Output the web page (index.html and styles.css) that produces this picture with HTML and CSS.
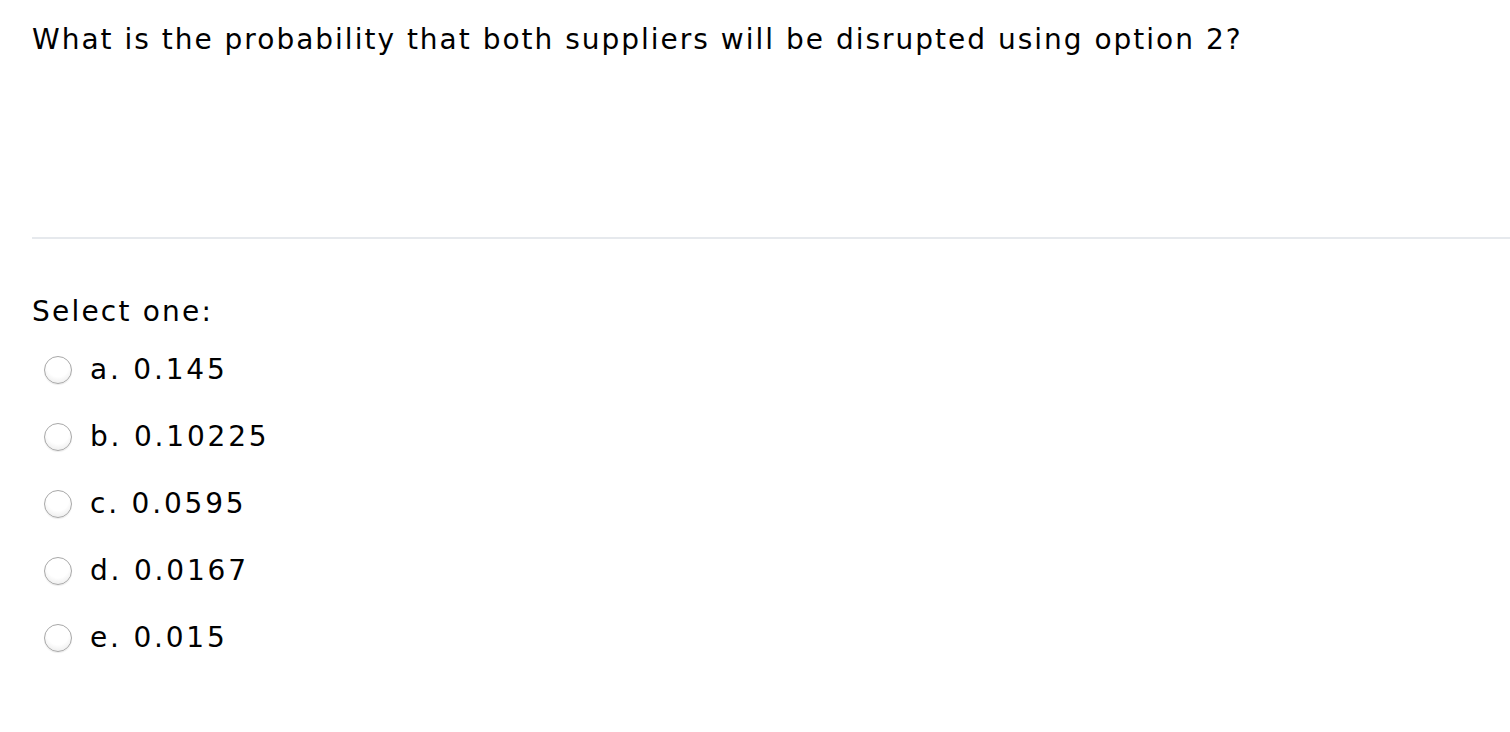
FILE: index.html
```html
<!DOCTYPE html>
<html>
<head>
<meta charset="utf-8">
<link rel="stylesheet" href="styles.css">
</head>
<body>
<div class="page">
  <div class="qtext">What is the probability that both suppliers will be disrupted using option 2?</div>
  <hr class="sep">
  <div class="prompt">Select one:</div>
  <div class="answers">
    <label class="opt"><input type="radio" name="q" class="radio"><span>a. 0.145</span></label>
    <label class="opt"><input type="radio" name="q" class="radio"><span>b. 0.10225</span></label>
    <label class="opt"><input type="radio" name="q" class="radio"><span>c. 0.0595</span></label>
    <label class="opt"><input type="radio" name="q" class="radio"><span>d. 0.0167</span></label>
    <label class="opt"><input type="radio" name="q" class="radio"><span>e. 0.015</span></label>
  </div>
</div>
</body>
</html>
```
FILE: styles.css
```css
html, body {
  margin: 0;
  padding: 0;
  background: #fff;
}
body {
  font-family: "DejaVu Sans", Verdana, sans-serif;
  color: #000;
}
.page {
  padding: 20px 0 0 32px;
}
.qtext {
  font-size: 28px;
  line-height: 40px;
  letter-spacing: 2px;
}
.sep {
  border: 0;
  height: 2px;
  background: #e6e9ed;
  margin: 177px 0 0 0;
}
.prompt {
  font-size: 28px;
  line-height: 40px;
  margin-top: 53px;
  letter-spacing: 2.2px;
}
.answers {
  display: flex;
  flex-direction: column;
  margin-top: 4px;
}
.opt {
  display: flex;
  align-items: center;
  height: 67px;
  font-size: 28px;
  letter-spacing: 2.8px;
  gap: 18px;
  padding-left: 12px;
}
.radio {
  appearance: none;
  -webkit-appearance: none;
  margin: 0;
  width: 28px;
  height: 28px;
  border-radius: 50%;
  border: 1px solid #a8a8a8;
  background: radial-gradient(circle at 50% 35%, #ffffff 50%, #e4e4e4 100%);
  box-shadow: 0 1px 1px rgba(0,0,0,0.08);
}
```
